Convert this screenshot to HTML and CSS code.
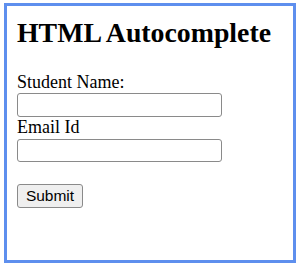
FILE: index.html
```html
<!DOCTYPE html>
<html>
<head>
<meta charset="utf-8">
<link rel="stylesheet" href="styles.css">
</head>
<body>
<div class="card">
  <h2 class="title">HTML Autocomplete</h2>
  <form class="form">
    <label class="label" for="name">Student Name:</label>
    <input class="field" id="name" type="text">
    <label class="label" for="email">Email Id</label>
    <input class="field field-second" id="email" type="text">
    <div class="spacer"></div>
    <button class="submit" type="button">Submit</button>
  </form>
</div>
</body>
</html>
```

FILE: styles.css
```css
html, body {
  margin: 0;
  padding: 0;
  background: #ffffff;
}
.card {
  box-sizing: border-box;
  width: 292px;
  height: 260px;
  margin: 3px 4px;
  border: 3px solid #5e8fee;
  padding: 0 10px;
  font-family: "Liberation Serif", "Times New Roman", serif;
  color: #000;
}
.title {
  font-size: 27.8px;
  font-weight: bold;
  line-height: 31px;
  margin: 11px 0 24px;
}
.form {
  display: flex;
  flex-direction: column;
  align-items: flex-start;
}
.label {
  display: block;
  font-size: 18px;
  line-height: 21px;
  height: 21px;
}
.field {
  box-sizing: border-box;
  width: 205px;
  height: 24px;
  margin: 0;
  border: 1px solid #8a8a8a;
  border-radius: 3px;
  background: #fff;
  padding: 1px 3px;
}
.field-second {
  margin-top: 1px;
  height: 23px;
}
.spacer {
  height: 22px;
}
.submit {
  box-sizing: border-box;
  width: 66px;
  height: 24px;
  margin: 0;
  padding: 0;
  font-family: "Liberation Sans", Arial, sans-serif;
  font-size: 15.5px;
  color: #000;
  background: #efefef;
  border: 1px solid #8a8a8a;
  border-radius: 3px;
}
```
